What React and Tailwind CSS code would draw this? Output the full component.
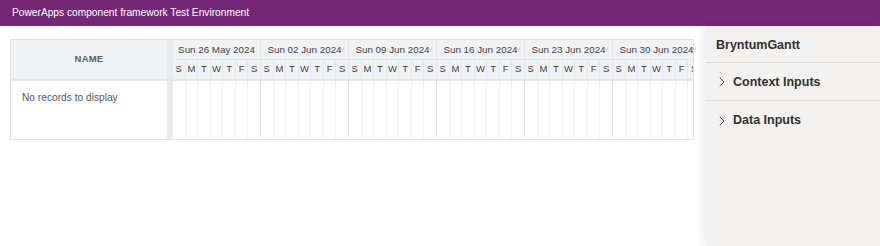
import React from 'react';

const weeks = ['Sun 26 May 2024', 'Sun 02 Jun 2024', 'Sun 09 Jun 2024', 'Sun 16 Jun 2024', 'Sun 23 Jun 2024', 'Sun 30 Jun 2024'];
const days = ['S', 'M', 'T', 'W', 'T', 'F', 'S'];

function Chevron() {
  return (
    <svg width="6" height="10" viewBox="0 0 6 10" fill="none" className="shrink-0">
      <path d="M0.8 0.8l4.2 4.2L0.8 9.2" stroke="#4a4846" strokeWidth="1" />
    </svg>
  );
}

export default function App() {
  return (
    <div className="w-[880px] h-[246px] flex flex-col overflow-hidden bg-white font-['Liberation_Sans',Arial,sans-serif]">
      {/* top bar */}
      <div className="h-[26px] shrink-0 bg-[#742774] text-white text-[10.2px] pl-[12px] flex items-center">
        PowerApps component framework Test Environment
      </div>

      <div className="flex flex-1 min-h-0">
        {/* gantt area */}
        <div className="flex-1 min-w-0 pt-[13px] pl-[10px] pr-[12px]">
          <div className="flex h-[101px] border border-[#e2e3e5] overflow-hidden">
            {/* name column */}
            <div className="w-[156px] shrink-0 flex flex-col">
              <div className="h-[41px] shrink-0 bg-[#f1f2f4] border-b-2 border-[#e6e7e9] flex items-center justify-center text-[9.5px] font-bold text-[#5a5f66] tracking-[0.2px]">
                NAME
              </div>
              <div className="pl-[11px] pt-[9px] text-[10.2px] text-[#555a60]">No records to display</div>
            </div>
            {/* splitter */}
            <div className="w-[6px] shrink-0 bg-[#e8e9eb]" />
            {/* timeline */}
            <div className="flex-1 min-w-0 overflow-hidden">
              <div className="flex w-[528px] h-full">
                {weeks.map((w, i) => (
                  <div key={i} className="w-[88px] shrink-0 flex flex-col border-r border-[#e6e7e9]">
                    <div className="h-[20px] shrink-0 bg-[#f1f2f4] border-b border-[#e6e7e9] flex items-center justify-center pt-[1px] text-[9.8px] text-[#3f444a] whitespace-nowrap">
                      {w}
                    </div>
                    <div className="h-[21px] shrink-0 bg-[#f1f2f4] border-b-2 border-[#e6e7e9] flex">
                      {days.map((d, j) => (
                        <div key={j} className={`flex-1 flex items-center justify-center text-[9.5px] text-[#3f444a] ${j < 6 ? 'border-r border-[#e6e7e9]' : ''}`}>
                          {d}
                        </div>
                      ))}
                    </div>
                    <div className="flex-1 flex">
                      {days.map((d, j) => (
                        <div key={j} className={`flex-1 ${j < 6 ? 'border-r border-[#eeeff0]' : ''}`} />
                      ))}
                    </div>
                  </div>
                ))}
              </div>
            </div>
          </div>
        </div>

        {/* side panel */}
        <div className="w-[174px] shrink-0 bg-[#f3f2f1] shadow-[-4px_0_8px_rgba(0,0,0,0.07)] text-[#323130]">
          <div className="h-[37px] flex items-center pl-[10px] pt-[2px] text-[12.5px] font-bold border-b border-[#dedcda]">
            BryntumGantt
          </div>
          <div className="h-[38px] flex items-center gap-[8px] pl-[13px] pt-[1px] text-[12.5px] font-bold border-b border-[#dedcda]">
            <Chevron />
            Context Inputs
          </div>
          <div className="h-[38px] flex items-center gap-[8px] pl-[13px] pt-[1px] text-[12.5px] font-bold">
            <Chevron />
            Data Inputs
          </div>
        </div>
      </div>
    </div>
  );
}
